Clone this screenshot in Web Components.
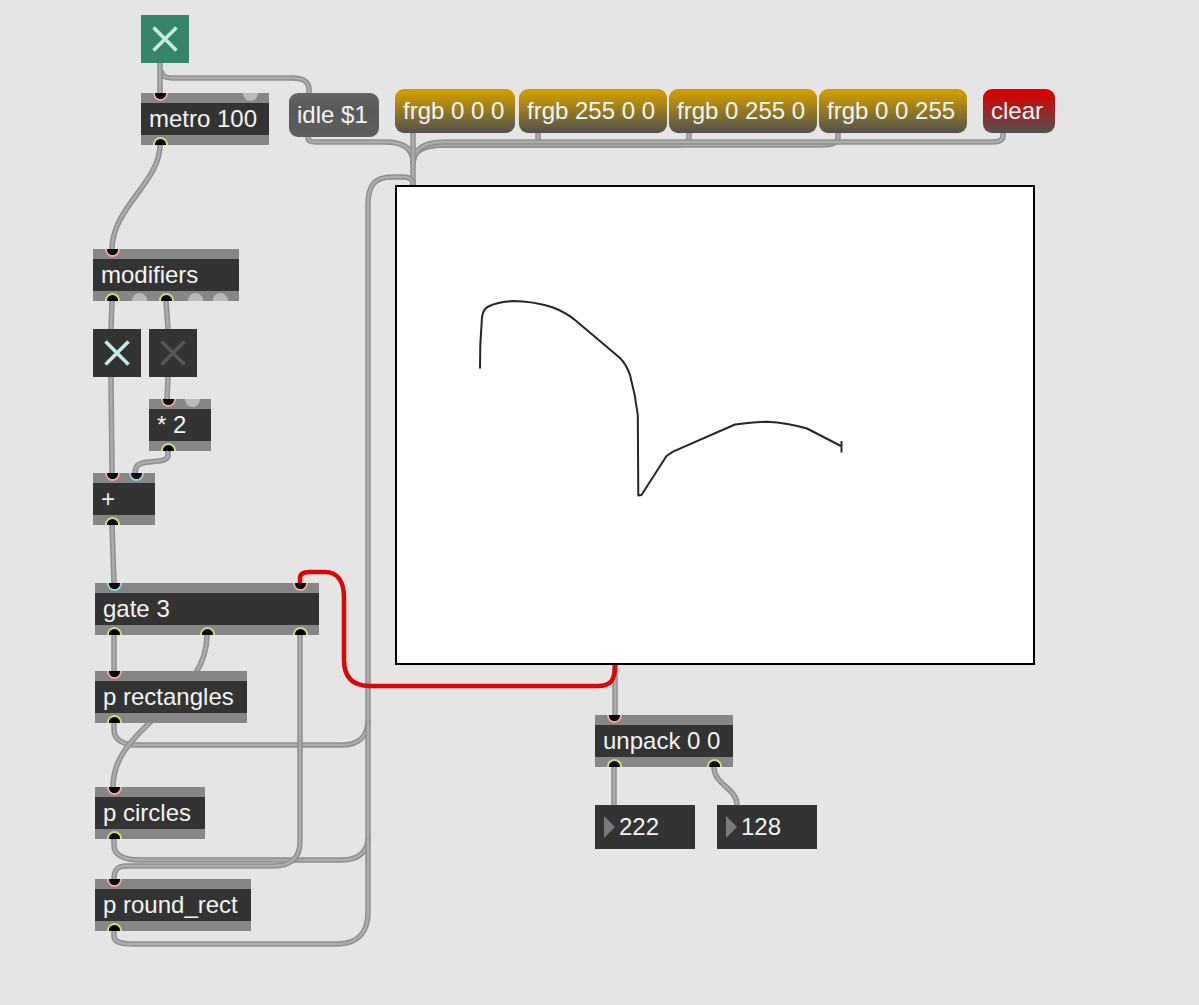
<!DOCTYPE html>
<html>
<head>
<meta charset="utf-8">
<title>patcher</title>
<style>
  html, body { margin: 0; padding: 0; background: #e5e5e5; }
</style>
</head>
<body>
<max-patcher>
  <!-- cords first, so the boxes sit on top of them -->
  <patch-cord d="M161 70C161 76 165 78 173 78H292C303 78 309 81 309 90V93"></patch-cord>
  <patch-cord d="M160 63V93"></patch-cord>
  <patch-cord d="M308 137C308 141 310 142 316 142H385C403 142 413 148 413 162"></patch-cord>
  <patch-cord d="M538 133V144"></patch-cord>
  <patch-cord d="M689 133V138C689 143 684 145 674 145H445C423 145 413 150 413 164"></patch-cord>
  <patch-cord d="M838 133V138C838 143 830 145 820 145H445C423 145 413 150 413 164"></patch-cord>
  <patch-cord d="M1003 133V136C1003 140 1000 142 992 142H445C423 142 413 150 413 164"></patch-cord>
  <patch-cord d="M413 133V185"></patch-cord>
  <patch-cord d="M114 723V730C114 740 124 745 136 745H342C360 745 368 735 368 720"></patch-cord>
  <patch-cord d="M114 839V846C114 855 124 860 140 860H342C360 860 368 850 368 838"></patch-cord>
  <patch-cord d="M114 931V936C114 942 120 944 134 944H338C358 944 368 932 368 912V205C368 186 374 177 392 177H403C410 177 413 179 413 185"></patch-cord>
  <patch-cord d="M300 635V842C300 858 290 866 274 866H126C117 866 114 870 114 879"></patch-cord>
  <patch-cord d="M160 145C160 182 112 208 112 249"></patch-cord>
  <patch-cord d="M112 301L111 329"></patch-cord>
  <patch-cord d="M166 301L168 329"></patch-cord>
  <patch-cord d="M111 377L112 473"></patch-cord>
  <patch-cord d="M168 377L167 399"></patch-cord>
  <patch-cord d="M168 451V455C168 461 160 461 148 462C138 463 135 466 135 473"></patch-cord>
  <patch-cord d="M112 525L114 583"></patch-cord>
  <patch-cord d="M114 635V671"></patch-cord>
  <patch-cord d="M207 635C207 665 190 685 160 713C128 742 113 760 113 787"></patch-cord>
  <patch-cord d="M615 665V715"></patch-cord>
  <patch-cord d="M614 767V805"></patch-cord>
  <patch-cord d="M714 767C714 785 737 788 737 805"></patch-cord>
  <patch-cord red d="M300 583V578C300 574 304 572 310 572H325C338 572 344 582 344 598V660C344 677 352 686 370 686H598C611 686 615 680 615 665"></patch-cord>

  <max-toggle x="141" y="15" color="#36856a"></max-toggle>
  <max-object x="141" y="93" w="128" in="19,h 109,o" out="19,y">metro 100</max-object>
  <max-message x="289" y="93" w="90" kind="plain">idle $1</max-message>
  <max-message x="395" y="89" w="120">frgb 0 0 0</max-message>
  <max-message x="519" y="89" w="148">frgb 255 0 0</max-message>
  <max-message x="669" y="89" w="148">frgb 0 255 0</max-message>
  <max-message x="819" y="89" w="148">frgb 0 0 255</max-message>
  <max-message x="983" y="89" w="72" kind="red">clear</max-message>

  <max-lcd x="395" y="185"></max-lcd>

  <max-object x="93" y="249" w="146" in="19,h" out="19,y 46,o 73,y 102,o 127,o">modifiers</max-object>
  <max-toggle x="93" y="329" on></max-toggle>
  <max-toggle x="149" y="329"></max-toggle>
  <max-object x="149" y="399" w="62" in="19,h 43,o" out="19,y">* 2</max-object>
  <max-object x="93" y="473" w="62" in="19,h 43,c" out="19,y">+</max-object>
  <max-object x="95" y="583" w="224" in="19,c 205,h" out="19,y 112,y 205,y">gate 3</max-object>
  <max-object x="95" y="671" w="152" in="19,h" out="19,y">p rectangles</max-object>
  <max-object x="95" y="787" w="110" in="19,h" out="19,y">p circles</max-object>
  <max-object x="95" y="879" w="156" in="19,h" out="19,y">p round_rect</max-object>
  <max-object x="595" y="715" w="138" in="19,h" out="19,y 119,y">unpack 0 0</max-object>
  <max-number x="595" y="805">222</max-number>
  <max-number x="717" y="805">128</max-number>
</max-patcher>

<script>
// shared :host rule for everything placed on the patcher canvas
const placed = `:host { display: block; position: absolute; left: var(--x); top: var(--y); width: var(--w); }`;

function place(el) {
  el.style.setProperty('--x', el.getAttribute('x') + 'px');
  el.style.setProperty('--y', el.getAttribute('y') + 'px');
  if (el.hasAttribute('w')) el.style.setProperty('--w', el.getAttribute('w') + 'px');
}

class MaxPatcher extends HTMLElement {
  constructor() {
    super();
    this.attachShadow({ mode: 'open' });
    this.shadowRoot.innerHTML = `
      <style>
        :host {
          display: block;
          position: relative;
          width: 1199px;
          height: 1005px;
          overflow: hidden;
          background: #e5e5e5;
          font-family: "Liberation Sans", Arial, sans-serif;
          font-size: 24px;
          color: #f4f4f4;
        }
      </style>
      <slot></slot>
    `;
  }
}

class PatchCord extends HTMLElement {
  constructor() {
    super();
    this.attachShadow({ mode: 'open' });
  }
  connectedCallback() {
    const d = this.getAttribute('d');
    const lines = this.hasAttribute('red')
      ? `<path d="${d}" stroke="#d80808" stroke-width="4.5"/>`
      : `<path d="${d}" stroke="#8e8e8e" stroke-width="5.5"/><path d="${d}" stroke="#acacac" stroke-width="2.5"/>`;
    this.shadowRoot.innerHTML = `
      <style>
        :host { display: block; position: absolute; left: 0; top: 0; width: 1199px; height: 1005px; }
        svg { display: block; }
        path { fill: none; }
      </style>
      <svg width="1199" height="1005" viewBox="0 0 1199 1005">${lines}</svg>
    `;
  }
}

// "19,h 109,o" -> little half circles along the edge of a box
function ports(spec, side) {
  return (spec || '').split(' ').filter(Boolean).map(p => {
    const [x, kind] = p.split(',');
    return `<i class="port ${side} ${kind}" style="left:${x - 7.5}px"></i>`;
  }).join('');
}

class MaxObject extends HTMLElement {
  constructor() {
    super();
    this.attachShadow({ mode: 'open' });
  }
  connectedCallback() {
    place(this);
    this.shadowRoot.innerHTML = `
      <style>
        ${placed}
        .bar { height: 10px; background: #868686; }
        .body { height: 32px; line-height: 32px; padding-left: 8px; background: #333; white-space: nowrap; }
        .port { position: absolute; width: 15px; height: 8px; box-sizing: border-box; background: #000; }
        .top { top: 0; border-radius: 0 0 8px 8px; border: 2px solid #f2a79a; border-top: 0; }
        .bottom { bottom: 0; border-radius: 8px 8px 0 0; border: 2px solid #c9dc78; border-bottom: 0; }
        .c { border-color: #8fd3e6; }
        .o { background: #bababa; border: 0; }
      </style>
      <div class="bar"></div>
      <div class="body"><slot></slot></div>
      <div class="bar"></div>
      ${ports(this.getAttribute('in'), 'top')}
      ${ports(this.getAttribute('out'), 'bottom')}
    `;
  }
}

class MaxMessage extends HTMLElement {
  constructor() {
    super();
    this.attachShadow({ mode: 'open' });
  }
  connectedCallback() {
    place(this);
    const kind = this.getAttribute('kind');
    const fill = kind === 'plain' ? 'linear-gradient(#626262, #595959 40%, #5e5e5e)'
      : kind === 'red' ? 'linear-gradient(#d80000 8%, #525252)'
      : 'linear-gradient(#cc9c00 8%, #505050)';
    this.shadowRoot.innerHTML = `
      <style>
        ${placed}
        :host { height: 44px; }
        div {
          height: 44px;
          line-height: 44px;
          padding-left: 8px;
          box-sizing: border-box;
          border-radius: 9px;
          white-space: nowrap;
          background: ${fill};
        }
      </style>
      <div><slot></slot></div>
    `;
  }
}

class MaxToggle extends HTMLElement {
  constructor() {
    super();
    this.attachShadow({ mode: 'open' });
  }
  connectedCallback() {
    place(this);
    const bg = this.getAttribute('color') || '#333';
    const lit = this.hasAttribute('on') || this.hasAttribute('color');
    this.shadowRoot.innerHTML = `
      <style>
        ${placed}
        :host { width: 48px; height: 48px; background: ${bg}; }
        svg { display: block; }
      </style>
      <svg width="48" height="48" viewBox="0 0 48 48">
        <path d="M12.5 12.5L35.5 35.5M35.5 12.5L12.5 35.5" fill="none" stroke-width="3.6" stroke="${lit ? '#c4ebe4' : '#565656'}"/>
      </svg>
    `;
  }
}

class MaxNumber extends HTMLElement {
  constructor() {
    super();
    this.attachShadow({ mode: 'open' });
  }
  connectedCallback() {
    place(this);
    this.shadowRoot.innerHTML = `
      <style>
        ${placed}
        :host { width: 100px; height: 44px; }
        div { display: flex; align-items: center; gap: 4px; height: 44px; padding-left: 9px; background: #333; }
        svg { display: block; }
      </style>
      <div>
        <svg width="11" height="22" viewBox="0 0 11 22"><path d="M0 0L11 11L0 22Z" fill="#7b7b7b"/></svg>
        <slot></slot>
      </div>
    `;
  }
}

class MaxLcd extends HTMLElement {
  constructor() {
    super();
    this.attachShadow({ mode: 'open' });
  }
  connectedCallback() {
    place(this);
    this.shadowRoot.innerHTML = `
      <style>
        ${placed}
        :host { width: 640px; height: 480px; box-sizing: border-box; border: 2px solid #000; background: #fff; }
        svg { display: block; }
      </style>
      <svg width="636" height="476" viewBox="397 187 636 476">
        <path fill="none" stroke="#262626" stroke-width="2" stroke-linejoin="round"
          d="M480 368.5L480.3 345L482 317C483 311 485 308 488.5 306.5C495 303 505 301.5 513 301C526 301 542 304 553 307.5C562 311 569 315 575 320L620 358C625 363 628 369 630 375C633 386 636 400 637.8 415L638.3 495.5L641.5 495L666.5 456L673 451.7L735 424.5C746 423 756 422 767 421.7C781 422.5 795 425 807 428.5L841 446"/>
        <path fill="none" stroke="#262626" stroke-width="2" d="M841.5 441V452.5"/>
      </svg>
    `;
  }
}

customElements.define('max-patcher', MaxPatcher);
customElements.define('patch-cord', PatchCord);
customElements.define('max-object', MaxObject);
customElements.define('max-message', MaxMessage);
customElements.define('max-toggle', MaxToggle);
customElements.define('max-number', MaxNumber);
customElements.define('max-lcd', MaxLcd);
</script>
</body>
</html>
